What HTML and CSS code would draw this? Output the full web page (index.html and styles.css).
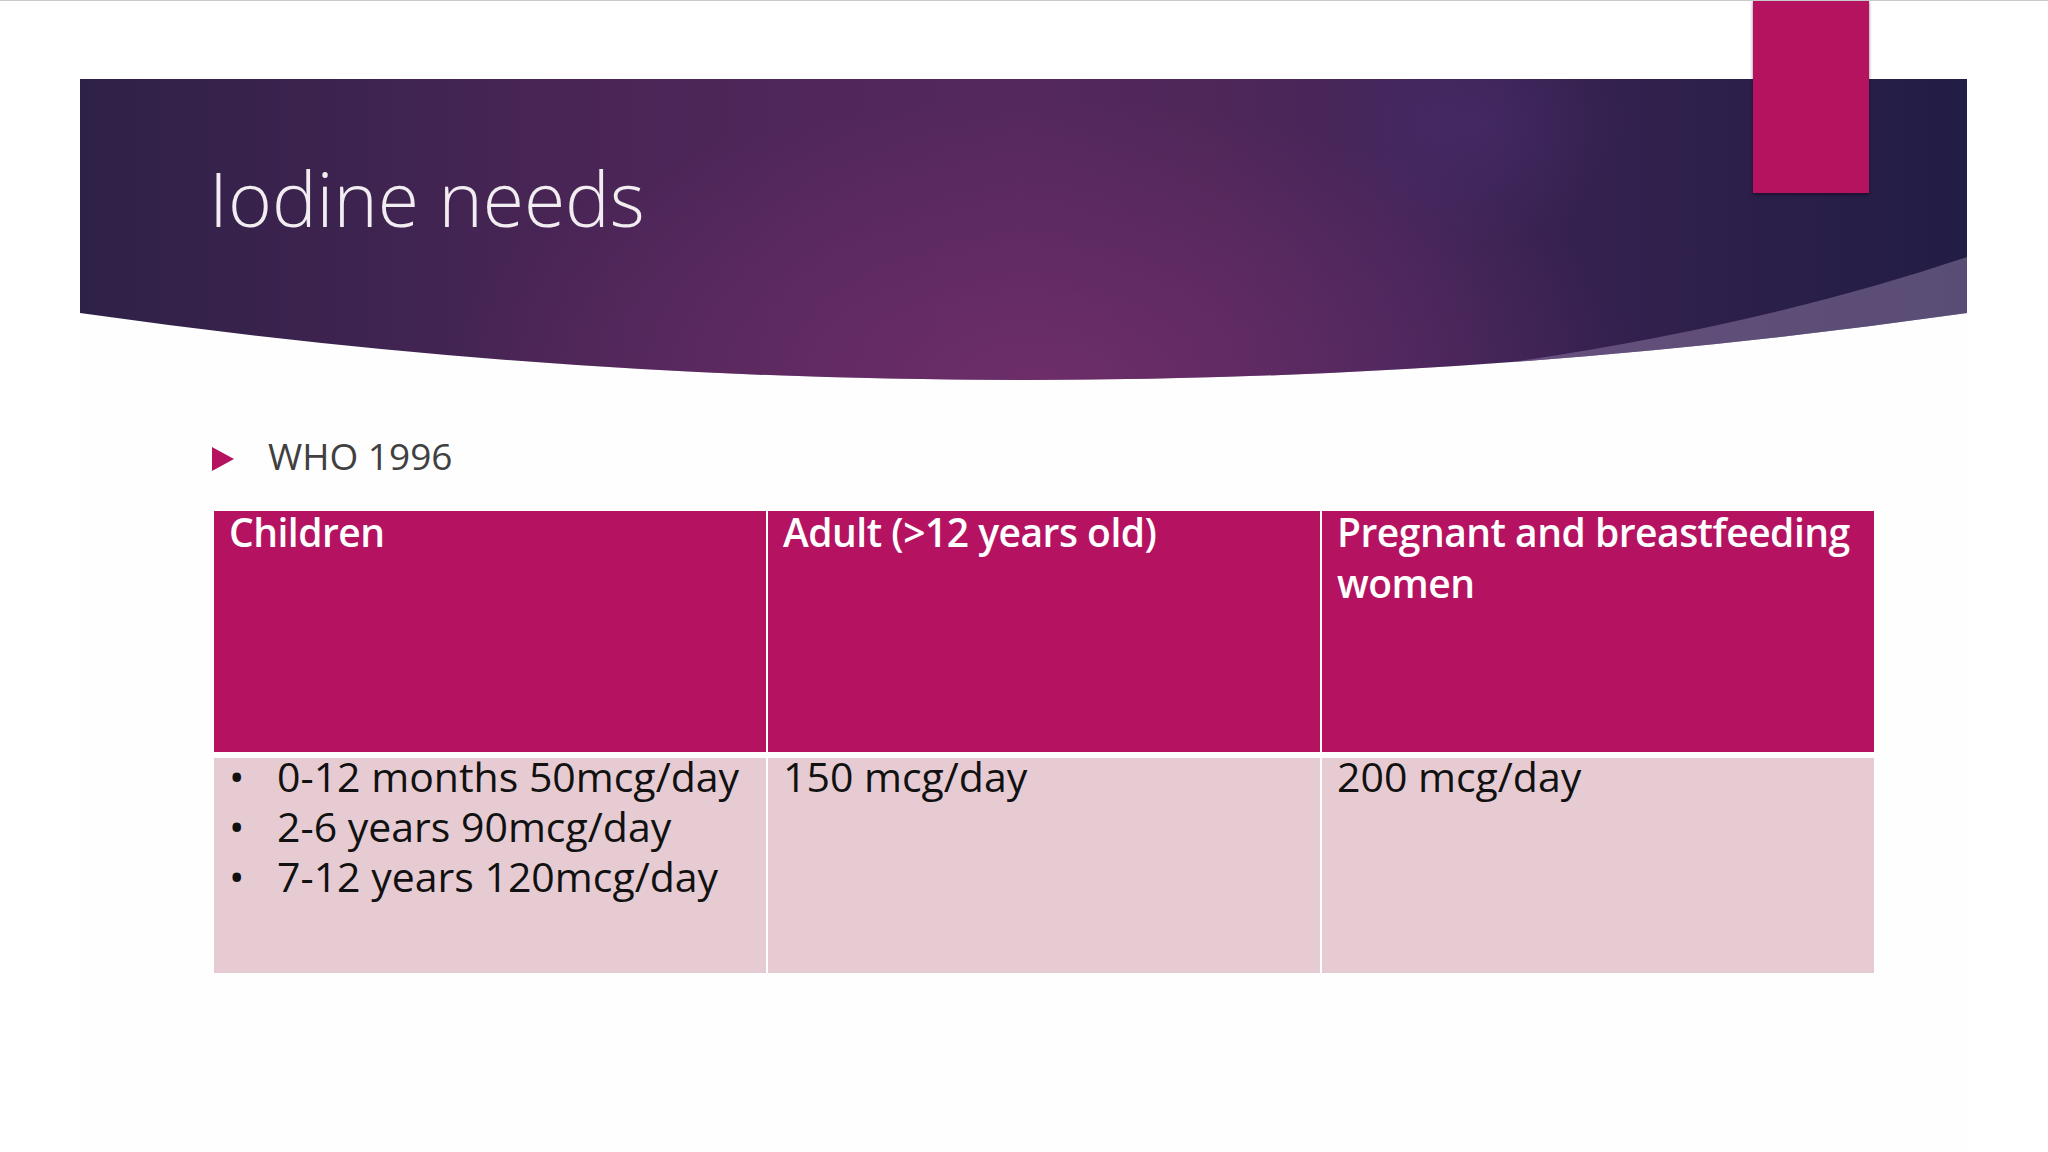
FILE: index.html
```html
<!DOCTYPE html>
<html lang="en">
<head>
<meta charset="utf-8">
<title>Iodine needs</title>
<link rel="stylesheet" href="styles.css">
</head>
<body>
<div class="screen">
  <div class="tab"></div>
  <main class="slide">
    <header class="banner">
      <svg class="sheen" width="1887" height="302" viewBox="0 0 1887 302" aria-hidden="true">
        <path d="M1397 288 Q1670 251 1887 178 V302 H1397 Z" fill="rgba(150,130,172,0.48)"/>
      </svg>
      <h1 class="title">Iodine needs</h1>
    </header>
    <div class="point">
      <span class="tri"></span>
      <span class="point-text">WHO 1996</span>
    </div>
    <div class="table">
      <div class="cell head"><div class="txt">Children</div></div>
      <div class="cell head"><div class="txt">Adult (&gt;12 years old)</div></div>
      <div class="cell head"><div class="txt">Pregnant and breastfeeding women</div></div>
      <div class="cell body">
        <ul class="txt list">
          <li><span class="dot">•</span><span>0-12 months 50mcg/day</span></li>
          <li><span class="dot">•</span><span>2-6 years 90mcg/day</span></li>
          <li><span class="dot">•</span><span>7-12 years 120mcg/day</span></li>
        </ul>
      </div>
      <div class="cell body"><div class="txt">150 mcg/day</div></div>
      <div class="cell body"><div class="txt">200 mcg/day</div></div>
    </div>
  </main>
</div>
</body>
</html>
```
FILE: styles.css
```css
html, body {
  margin: 0;
  padding: 0;
  background: #ffffff;
}

.screen {
  position: relative;
  width: 2048px;
  height: 1151px;
  border-top: 1px solid #c9c9c9;
  overflow: hidden;
  font-family: "Segoe UI", "Open Sans", "Noto Sans", sans-serif;
}

.tab {
  position: absolute;
  left: 1753px;
  top: -1px;
  width: 116px;
  height: 193px;
  background: #b5135f;
  box-shadow: 0 2px 3px rgba(20, 5, 30, 0.55);
  z-index: 2;
}

.slide {
  margin: 78px 0 0 80px;
  width: 1887px;
  height: 1073px;
  background: #fefefe;
  display: flex;
  flex-direction: column;
}

.banner {
  position: relative;
  height: 302px;
  flex: none;
  padding: 74px 0 0 129px;
  box-sizing: border-box;
  clip-path: path('M0 0 H1887 V234 Q943.5 368 0 234 Z');
  background:
    radial-gradient(ellipse 150px 120px at 1395px 45px, rgba(80, 50, 120, 0.35), rgba(80, 50, 120, 0) 100%),
    radial-gradient(ellipse 600px 280px at 960px 300px, rgba(122, 48, 112, 0.65), rgba(122, 48, 112, 0) 100%),
    linear-gradient(90deg, #2e2148 0%, #3b234e 12%, #482555 25%, #51275b 40%, #54285d 50%, #4f2759 60%, #43255a 70%, #34214f 80%, #2a1f49 90%, #221d44 100%);
}

.sheen {
  position: absolute;
  left: 0;
  top: 0;
}

.title {
  position: relative;
  margin: 0;
  font-weight: 300;
  font-size: 75px;
  line-height: 91px;
  color: #f1edf1;
}

.point {
  display: flex;
  align-items: center;
  margin: 53px 0 0 132px;
  height: 44px;
}

.tri {
  width: 0;
  height: 0;
  border-left: 22px solid #b5135f;
  border-top: 12.5px solid transparent;
  border-bottom: 12.5px solid transparent;
  margin-top: 5px;
}

.point-text {
  margin-left: 34px;
  font-size: 37px;
  line-height: 44px;
  color: #404040;
}

.table {
  margin: 33px 0 0 134px;
  width: 1660px;
  display: grid;
  grid-template-columns: repeat(3, 552px);
  grid-template-rows: 241px 215px;
  column-gap: 2px;
  row-gap: 6px;
}

.cell {
  padding: 0 4px 0 15px;
  box-sizing: border-box;
}

.head {
  background: #b51362;
  color: #ffffff;
  font-weight: 600;
  font-size: 39px;
  letter-spacing: -0.5px;
  line-height: 51px;
}

.head .txt {
  margin-top: -5px;
}

.body {
  background: #e6cbd3;
  color: #111111;
  font-size: 41px;
  line-height: 50px;
}

.body .txt {
  margin-top: -7px;
}

.list {
  list-style: none;
  padding: 0;
  margin: 0;
}

.list li {
  display: flex;
}

.dot {
  width: 48px;
  flex: none;
}
```
